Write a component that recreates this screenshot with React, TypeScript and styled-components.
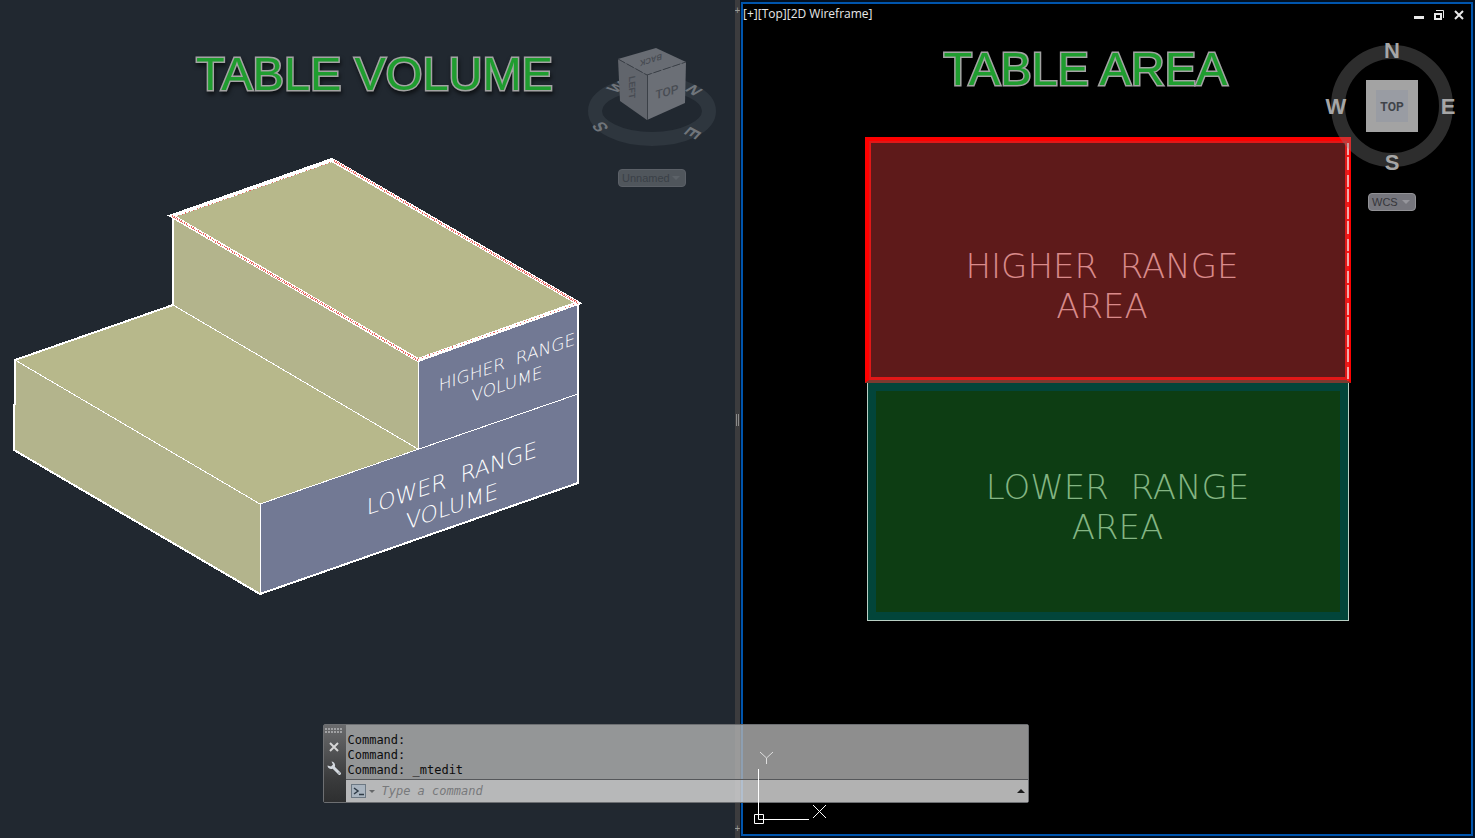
import React from "react";
import styled, { createGlobalStyle } from "styled-components";

const Global = createGlobalStyle`
  * { box-sizing: border-box; }
  body { margin: 0; background: #212830; font-family: "Open Sans", sans-serif; }
`;

const Workspace = styled.main`
  position: relative;
  display: grid;
  grid-template-columns: 1fr 5px 1fr;
  min-height: 100vh;
  background: #212830;
`;

const Viewport = styled.section<{ $active?: boolean }>`
  position: relative;
  display: flex;
  flex: 1;
  flex-direction: column;
  align-items: center;
  overflow: hidden;
  background: ${(p) => (p.$active ? "#000" : "#212830")};
  border: ${(p) => (p.$active ? "2px solid #0055ad" : "0")};
`;

const ActiveFrame = styled.div`
  display: flex;
  padding: 2px 2px 2px 1px;
  background: #021021;
`;

const Splitter = styled.div`
  display: flex;
  flex-direction: column;
  align-items: center;
  justify-content: space-between;
  padding: 6px 0 4px;
  background: #3c3c3e;
  color: #9a9a9a;
  font: 10px/10px "Liberation Sans", sans-serif;
`;

const Grip = styled.div`
  width: 3px;
  height: 12px;
  border: solid #8b8b8b;
  border-width: 0 1px;
`;

const Title = styled.h1<{ $top: number; $left?: number; $right?: number }>`
  margin: 0;
  padding: ${(p) => `${p.$top}px ${p.$right ?? 0}px 0 ${p.$left ?? 0}px`};
  font: 400 47px/56px "Liberation Sans", sans-serif;
  color: #1f9d2f;
  -webkit-text-stroke: 3px #a3a3a3;
  paint-order: stroke fill;
  filter: drop-shadow(1px 3px 2px rgba(0, 0, 0, 0.6));
`;

const Solid = styled.svg`
  display: block;
  width: 100%;
  margin-top: 48px;
`;

const FaceLabel = styled.text<{ $size: number }>`
  font-family: "DejaVu Sans", sans-serif;
  font-weight: 200;
  font-size: ${(p) => p.$size}px;
  fill: #fff;
  text-anchor: middle;
  white-space: pre;
`;

const Plan = styled.div`
  position: relative;
  display: flex;
  flex-direction: column;
  align-self: stretch;
  margin: 40px 120px 0 122px;
`;

const OverlapEdge = styled.div`
  position: absolute;
  top: 6px;
  right: 2px;
  width: 2px;
  height: 238px;
  background: repeating-linear-gradient(#f0a9a9 0 12px, #f01c1c 12px 14px, #f0a9a9 14px 27px, #f01c1c 27px 32px);
`;

const Region = styled.div<{ $kind: "higher" | "lower" }>`
  display: flex;
  flex-direction: column;
  align-items: center;
  font: 200 34px/40px "DejaVu Sans", sans-serif;
  white-space: pre;
  ${(p) =>
    p.$kind === "higher"
      ? `height: 246px; padding: 105px 12px 0 0; color: #d98a8a; background: #5e1a1a;
         border: 4px solid #f00; border-bottom: 3px solid #7a3a30;
         box-shadow: inset 0 0 0 2px #e01818, inset 0 -3px 0 0 #e01818;`
      : `height: 238px; margin: 0 2px; padding: 84px 0 0 19px; color: #84b583; background: #0d3d13;
         border: 1px solid #b9cfc4; border-top: 0; box-shadow: inset 0 0 0 8px #02453a;`}
`;

const CaptionBar = styled.header`
  position: absolute;
  top: 0;
  left: 0;
  right: 0;
  display: flex;
  justify-content: space-between;
  padding: 2px 5px 0 0;
  color: #e8e8e8;
  font: 12px/16px "Open Sans", sans-serif;
`;

const WindowButtons = styled.div`
  display: flex;
  gap: 6px;
  padding-top: 2px;
`;

const IconButton = styled.button`
  display: flex;
  align-items: center;
  justify-content: center;
  width: 14px;
  height: 14px;
  padding: 0;
  border: 0;
  background: none;
`;

const CubeWidget = styled.div<{ $top: number; $right: number; $gap: number }>`
  position: absolute;
  top: ${(p) => p.$top}px;
  right: ${(p) => p.$right}px;
  display: flex;
  flex-direction: column;
  align-items: center;
  gap: ${(p) => p.$gap}px;
`;

const CoordButton = styled.button<{ $dim?: boolean }>`
  display: flex;
  align-items: center;
  justify-content: space-between;
  width: ${(p) => (p.$dim ? 68 : 48)}px;
  height: 18px;
  padding: 0 5px 0 3px;
  border: 1px solid ${(p) => (p.$dim ? "#5b6067" : "#929296")};
  border-radius: 4px;
  background: ${(p) => (p.$dim ? "#50565c" : "#76767d")};
  color: ${(p) => (p.$dim ? "#3a4047" : "#35353a")};
  font: 11px/16px "Liberation Sans", sans-serif;
`;

const Ucs = styled.svg`
  position: absolute;
  z-index: 2;
  left: 9px;
  bottom: 8px;
`;

const CommandWindow = styled.form`
  position: absolute;
  left: 22%;
  right: 30%;
  bottom: 35px;
  display: flex;
  height: 79px;
  margin: 0 4px 0 -2px;
  border: 1px solid #6d6f72;
  border-radius: 2px;
`;

const Rail = styled.div`
  display: flex;
  flex-direction: column;
  align-items: center;
  gap: 3px;
  width: 22px;
  padding: 3px 1px 0 0;
  background: linear-gradient(#6a6b6d, #3a3b3c 70%, #2e2f30);
`;

const RailButton = styled(IconButton)`
  width: 18px;
  height: 18px;
`;

const Console = styled.div`
  flex: 1;
  display: flex;
  flex-direction: column;
  color: #0c0c0c;
`;

const History = styled.div`
  flex: 1;
  padding: 8px 2px 0;
  background: rgba(178, 178, 178, 0.8);
  border-bottom: 1px solid #55575a;
  font: 12px/15px "DejaVu Sans Mono", monospace;
`;

const Prompt = styled.div`
  display: flex;
  align-items: center;
  gap: 3px;
  height: 22px;
  padding: 0 0 0 4px;
  background: rgba(212, 212, 212, 0.84);
`;

const PromptButton = styled(IconButton)`
  width: 26px;
  height: 16px;
`;

const CommandInput = styled.input`
  flex: 1;
  min-width: 0;
  padding: 0 0 0 3px;
  border: 0;
  outline: 0;
  background: none;
  font: italic 12px/16px "DejaVu Sans Mono", monospace;
  &::placeholder { color: #77797b; opacity: 1; }
`;

function IsoCube() {
  return (
    <svg width="132" height="112" viewBox="586 44 132 112" role="img" aria-label="View cube">
      <ellipse cx="652" cy="111" rx="57" ry="28" fill="none" stroke="#2e363e" strokeWidth="14" />
      <g fontFamily="Liberation Sans" fontWeight="700" fontSize="20" fill="#70757b" textAnchor="middle">
        <text transform="translate(617 87) scale(1 .55) rotate(-45)" y="7">W</text>
        <text transform="translate(694 90) scale(1 .6) rotate(45)" y="7">N</text>
        <text transform="translate(600 127) scale(1 .65) rotate(-120)" y="7">S</text>
        <text transform="translate(693 133) scale(1 .75) rotate(125)" y="7">E</text>
      </g>
      <path d="M618 59 656 48 686 62 647 75Z" fill="#686c73" />
      <path d="M618 59 647 75V120L620 101Z" fill="#61656c" />
      <path d="M686 62 647 75V120L685 103Z" fill="#6b6f76" />
      <path d="M618 59 647 75 686 62" fill="none" stroke="#3b4047" strokeDasharray="8 2" />
      <path d="M647.500 75V120" stroke="#3b4047" />
      <g fontFamily="Liberation Sans" fontWeight="700" fill="#484c53" textAnchor="middle">
        <text transform="translate(667 96) skewY(-16)" fontSize="12" fontFamily="Roboto" fontWeight="500">TOP</text>
        <text transform="translate(629 88) rotate(90) skewX(12)" fontSize="9">LEFT</text>
        <text transform="translate(651 57) rotate(162) skewX(-20)" fontSize="8">BACK</text>
      </g>
    </svg>
  );
}

function TopCube() {
  return (
    <svg width="140" height="140" viewBox="1322 36 140 140" role="img" aria-label="View cube">
      <circle cx="1392" cy="106" r="54" fill="none" stroke="#808080" strokeOpacity="0.35" strokeWidth="14" />
      <rect x="1366" y="80" width="52" height="52" fill="#a3a3a3" />
      <rect x="1376" y="90" width="32" height="32" fill="#999ca3" />
      <g fontFamily="Liberation Sans" fontWeight="700" fontSize="22" fill="#a6a6a6" textAnchor="middle">
        <text x="1392" y="58">N</text>
        <text x="1392" y="170">S</text>
        <text x="1336" y="114">W</text>
        <text x="1448" y="114">E</text>
      </g>
      <text x="1392" y="111" fontFamily="Roboto" fontWeight="700" fontSize="12" fill="#3f4349" textAnchor="middle">TOP</text>
    </svg>
  );
}

function DropArrow({ color }: { color: string }) {
  return (
    <svg width="8" height="4" aria-hidden="true">
      <path d="M0 0h8L4 4z" fill={color} />
    </svg>
  );
}

export default function App() {
  return (
    <>
      <Global />
      <Workspace>
        <Viewport>
          <Title $top={46} $left={14}>TABLE VOLUME</Title>
          <Solid viewBox="0 150 735 456" role="img" aria-label="Stepped solid">
            <g fill="#b7b88b">
              <path d="M15 360 173 305 418 449 260 504Z" />
              <path d="M172 216 332 160 578 303 418 360Z" />
            </g>
            <g fill="#b3b48c">
              <path d="M173 216 418 360V449L173 305Z" />
              <path d="M15 360 260 504V594L15 450Z" />
            </g>
            <path d="M260 504 418 449V360L578 303V483L260 594Z" fill="#727994" />
            <g fill="none" stroke="#fff" shapeRendering="crispEdges">
              <path d="M15 360 260 504 578 394M173 305 418 449V360M260 504V594" />
              <path d="M173 216V305L15 360V405M14 404V450L260 594 578 483V303" strokeWidth="2" />
              <path d="M172 216 332 160 578 303 418 360Z" strokeWidth="4" />
              <path d="M334 161 578 303M172 216 418 360" stroke="#e8655f" strokeWidth="2" strokeDasharray="1 1" />
              <path d="M174 217 332 162M418 359 576 304" stroke="#e8655f" strokeDasharray="1 3" />
            </g>
            <FaceLabel $size={17} transform="translate(507 368) skewY(-19)">HIGHER  RANGE</FaceLabel>
            <FaceLabel $size={17} transform="translate(507 390) skewY(-19)">VOLUME</FaceLabel>
            <FaceLabel $size={22} transform="translate(452 486) skewY(-19)">LOWER  RANGE</FaceLabel>
            <FaceLabel $size={22} transform="translate(452 514) skewY(-19)">VOLUME</FaceLabel>
          </Solid>
          <CubeWidget $top={44} $right={17} $gap={13}>
            <IsoCube />
            <CoordButton $dim>
              Unnamed
              <DropArrow color="#5c6268" />
            </CoordButton>
          </CubeWidget>
        </Viewport>
        <Splitter>
          <span>+</span>
          <Grip />
          <span>+</span>
        </Splitter>
        <ActiveFrame>
          <Viewport $active>
            <CaptionBar>
              <span>[+][Top][2D Wireframe]</span>
              <WindowButtons>
                <IconButton aria-label="Minimize">
                  <svg width="12" height="12"><path d="M1 7h10v3H1z" fill="#e8e8e8" /></svg>
                </IconButton>
                <IconButton aria-label="Restore">
                  <svg width="12" height="12" fill="none" stroke="#e8e8e8">
                    <path d="M2 5h6v5H2z" strokeWidth="2" />
                    <path d="M3 1.500h7.500V9" />
                  </svg>
                </IconButton>
                <IconButton aria-label="Close">
                  <svg width="12" height="12"><path d="m2 2 8 8m0-8-8 8" stroke="#e8e8e8" strokeWidth="2" /></svg>
                </IconButton>
              </WindowButtons>
            </CaptionBar>
            <Title $top={37} $right={43}>TABLE AREA</Title>
            <Plan>
              <Region $kind="higher">
                <span>HIGHER  RANGE</span>
                <span>AREA</span>
              </Region>
              <Region $kind="lower">
                <span>LOWER  RANGE</span>
                <span>AREA</span>
              </Region>
              <OverlapEdge />
            </Plan>
            <CubeWidget $top={32} $right={9} $gap={17}>
              <TopCube />
              <CoordButton>
                WCS
                <DropArrow color="#96969c" />
              </CoordButton>
            </CubeWidget>
            <Ucs width="74" height="76" viewBox="752 750 74 76" fill="none" stroke="#fff" aria-hidden="true">
              <path d="M758.500 769V819.500H809M754.500 814.500h9v9h-9zM813 805l13 13M826 805l-13 13" />
              <path d="M760 752l6.500 6 6.500-6M766.500 758v6" stroke="#dedede" />
            </Ucs>
          </Viewport>
        </ActiveFrame>
        <CommandWindow>
          <Rail>
            <svg width="18" height="7" aria-hidden="true">
              <path d="M0 1h18M0 4h18" stroke="#a0a1a3" strokeWidth="2" strokeDasharray="2 1" />
            </svg>
            <RailButton type="button" aria-label="Close">
              <svg width="10" height="10"><path d="m1 1 8 8m0-8-8 8" stroke="#d6d6d6" strokeWidth="2" /></svg>
            </RailButton>
            <RailButton type="button" aria-label="Customize">
              <svg width="16" height="16" fill="none">
                <path d="M7.500 7.500l6 6" stroke="#d3d8de" strokeWidth="3" strokeLinecap="round" />
                <path d="M5.500 1.500 7 4.500 5 6.500 1.500 5.500C1.500 8 4 9.500 6.500 8.800L9 6.500C9.500 4 8 1.500 5.500 1.500Z" fill="#d3d8de" />
                <path d="M12.500 13h1" stroke="#55585c" />
              </svg>
            </RailButton>
          </Rail>
          <Console>
            <History>
              <div>Command:</div>
              <div>Command:</div>
              <div>Command: _mtedit</div>
            </History>
            <Prompt>
              <PromptButton type="button" aria-label="Recent commands">
                <svg width="26" height="14" fill="none">
                  <rect x="1.500" y="0.500" width="14" height="13" fill="#a9b4bf" stroke="#6c7883" />
                  <path d="m4 4 4 3-4 3M9 10.500h5" stroke="#2f3b46" strokeWidth="1.500" />
                  <path d="M19 6h6l-3 3z" fill="#66686a" />
                </svg>
              </PromptButton>
              <CommandInput placeholder="Type a command" aria-label="Command" />
              <IconButton type="button" aria-label="Show history">
                <svg width="8" height="4"><path d="M0 4h8L4 0z" fill="#1c1c1c" /></svg>
              </IconButton>
            </Prompt>
          </Console>
        </CommandWindow>
      </Workspace>
    </>
  );
}
